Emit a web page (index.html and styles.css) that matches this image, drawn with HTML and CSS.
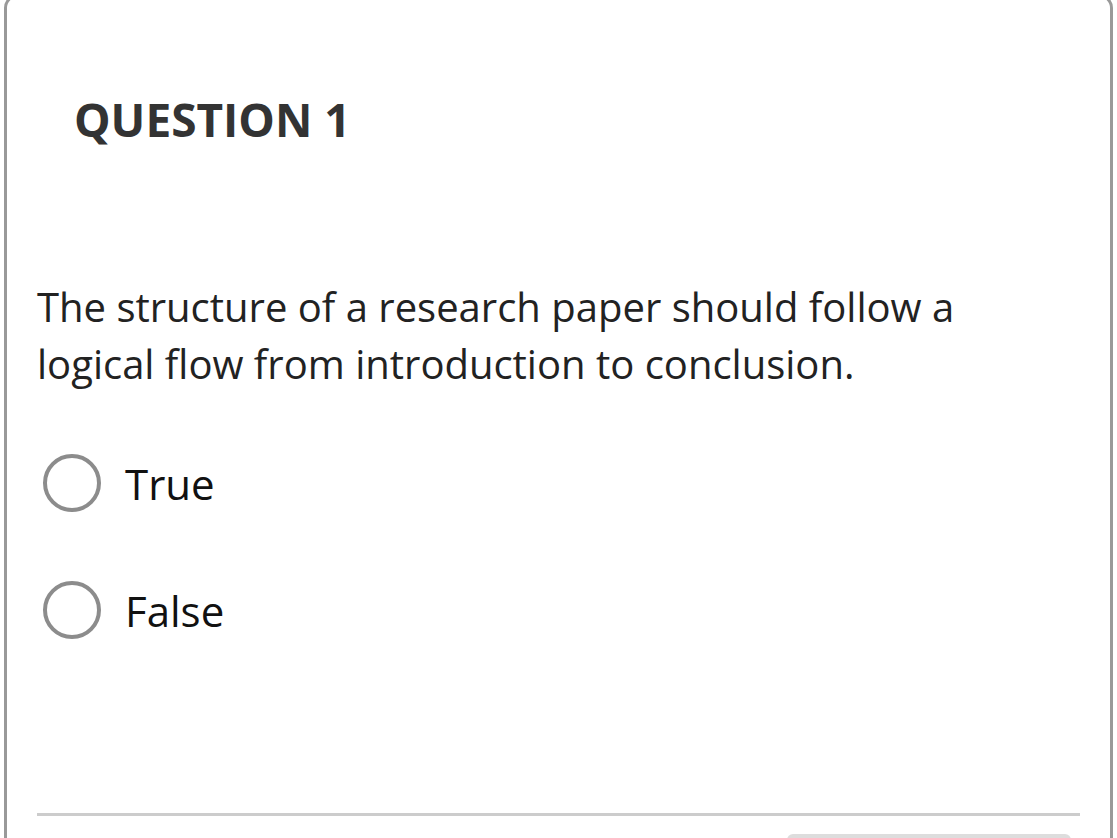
FILE: index.html
```html
<!DOCTYPE html>
<html lang="en">
<head>
    <meta charset="UTF-8">
    <meta name="viewport" content="width=device-width, initial-scale=1.0">
    <title>Question 1</title>
    <link rel="stylesheet" href="styles.css">
</head>
<body>
    <div class="question-card">
        <h2 class="question-title">QUESTION 1</h2>

        <p class="question-text">The structure of a research paper should follow a logical flow from introduction to conclusion.</p>

        <div class="answers">
            <label class="answer">
                <span class="radio"></span>
                <span class="answer-label">True</span>
            </label>
            <label class="answer">
                <span class="radio"></span>
                <span class="answer-label">False</span>
            </label>
        </div>

        <div class="divider"></div>

        <div class="actions">
            <button class="save-button" type="button"></button>
        </div>
    </div>
</body>
</html>
```

FILE: styles.css
```css
* {
    box-sizing: border-box;
    margin: 0;
    padding: 0;
    font-family: 'Open Sans', 'Noto Sans', Arial, sans-serif;
}

body {
    background-color: #ffffff;
    overflow: hidden;
}

.question-card {
    margin: -6px 4px 0 4px;
    height: 900px;
    border: 3px solid #999999;
    border-radius: 14px 14px 0 0;
    padding: 0 30px;
}

.question-title {
    margin-top: 92px;
    padding-left: 37px;
    font-size: 46px;
    font-weight: 700;
    line-height: 60px;
    color: #333333;
}

.question-text {
    margin-top: 129px;
    width: 1000px;
    font-size: 40px;
    line-height: 57px;
    color: #222222;
}

.answers {
    margin-top: 62px;
    display: flex;
    flex-direction: column;
    gap: 69px;
}

.answer {
    display: flex;
    align-items: center;
    gap: 24px;
    padding-left: 6px;
}

.radio {
    width: 58px;
    height: 58px;
    border: 4px solid #8c8c8c;
    border-radius: 50%;
    flex-shrink: 0;
}

.answer-label {
    font-size: 42px;
    color: #111111;
}

.divider {
    margin-top: 174px;
    height: 3px;
    background-color: #cccccc;
}

.actions {
    display: flex;
    justify-content: flex-end;
    padding-right: 9px;
    margin-top: 18px;
}

.save-button {
    width: 284px;
    height: 40px;
    border: none;
    border-radius: 6px;
    background-color: #dddddd;
}
```
